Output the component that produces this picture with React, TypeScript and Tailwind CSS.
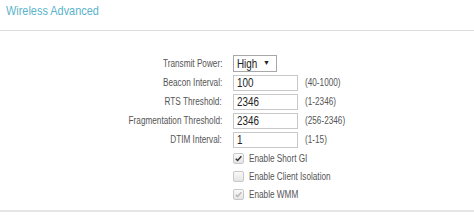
import React from "react";

const rows = [
  { label: "Beacon Interval:", value: "100", range: "(40-1000)" },
  { label: "RTS Threshold:", value: "2346", range: "(1-2346)" },
  { label: "Fragmentation Threshold:", value: "2346", range: "(256-2346)" },
  { label: "DTIM Interval:", value: "1", range: "(1-15)" },
];

const checks = [
  { label: "Enable Short GI", checked: true, disabled: false },
  { label: "Enable Client Isolation", checked: false, disabled: false },
  { label: "Enable WMM", checked: true, disabled: true },
];

function Box({ checked, disabled }: { checked: boolean; disabled: boolean }) {
  return (
    <span className="w-[11px] h-[11px] shrink-0 rounded-[2px] border border-[#c8c8c8] bg-gradient-to-b from-[#fafafa] to-[#e4e4e4] flex items-center justify-center">
      {checked && (
        <svg width="9" height="9" viewBox="0 0 10 10">
          <path
            d="M2 5.3 L4 7.3 L8.2 2.6"
            fill="none"
            stroke={disabled ? "#b8b8b8" : "#333"}
            strokeWidth="1.6"
          />
        </svg>
      )}
    </span>
  );
}

// the source text is a little narrow, squeeze it sideways
const sqL = "inline-block whitespace-nowrap scale-x-[0.82] origin-left";
const sqR = "inline-block whitespace-nowrap scale-x-[0.82] origin-right";

export default function App() {
  return (
    <div
      className="w-[474px] h-[220px] bg-white overflow-hidden text-[10px] text-[#555]"
      style={{ fontFamily: '"Liberation Sans", Arial, sans-serif' }}
    >
      {/* header */}
      <div className="h-[31px] border-b border-[#dcdcdc] pl-[6px] pt-[1px] text-[13px] text-[#5ab3cb]">
        <span className="inline-block whitespace-nowrap scale-x-[0.84] origin-left">Wireless Advanced</span>
      </div>

      {/* form */}
      <div className="pt-[23px] pb-[7px] grid grid-cols-[222px_1fr] gap-x-[11px] border-b-2 border-[#e6e6e6]">
        <div className="h-[19px] flex items-center justify-end">
          <span className={sqR}>Transmit Power:</span>
        </div>
        <div className="h-[19px] flex items-center">
          <div className="w-[44px] h-[17px] border border-[#a8a8a8] flex items-center justify-between pl-[3px] pr-[6px] text-[12px] text-[#222]">
            <span className={sqL}>High</span>
            <span className="text-[7px]">▼</span>
          </div>
        </div>

        {rows.map((r) => (
          <React.Fragment key={r.label}>
            <div className="h-[19px] flex items-center justify-end">
              <span className={sqR}>{r.label}</span>
            </div>
            <div className="h-[19px] flex items-center gap-[7px]">
              <div className="w-[65px] h-[16px] shrink-0 border border-[#c8c8c8] flex items-center pl-[3px] text-[12px] text-[#222]">
                <span className={sqL}>{r.value}</span>
              </div>
              <span className={sqL}>{r.range}</span>
            </div>
          </React.Fragment>
        ))}

        {checks.map((c) => (
          <React.Fragment key={c.label}>
            <div className="h-[18px]" />
            <div className="h-[18px] flex items-center gap-[5px]">
              <Box checked={c.checked} disabled={c.disabled} />
              <span className={sqL}>{c.label}</span>
            </div>
          </React.Fragment>
        ))}
      </div>
    </div>
  );
}
